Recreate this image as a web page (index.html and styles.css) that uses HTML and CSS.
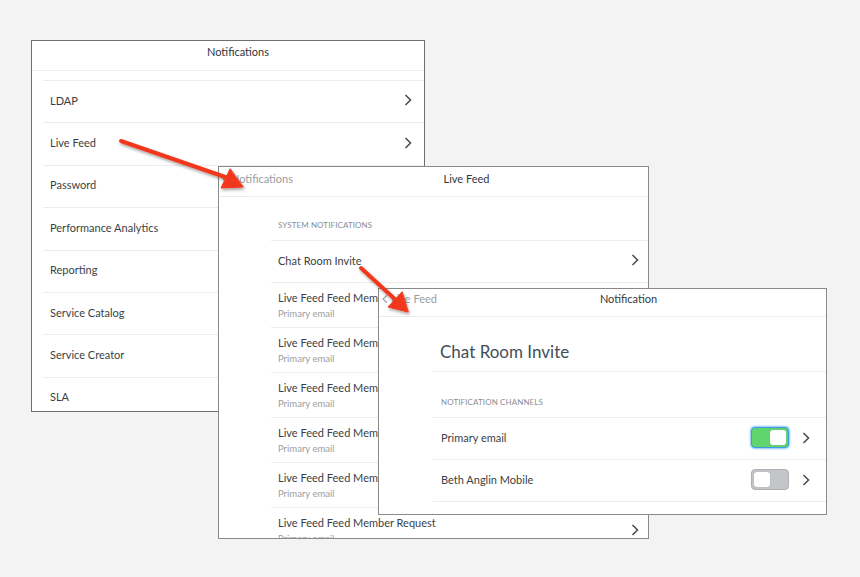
FILE: index.html
```html
<!DOCTYPE html>
<html lang="en">
<head>
  <meta charset="UTF-8">
  <meta name="viewport" content="width=device-width, initial-scale=1.0">
  <title>Notification settings</title>
  <link rel="stylesheet" href="styles.css">
</head>
<body>
  <div class="stage">

    <!-- Pantalla 1: lista de notificaciones -->
    <section class="panel panel-root">
      <header class="bar">
        <span class="bar-title">Notifications</span>
      </header>
      <ul class="list list-root">
        <li class="row"><span>LDAP</span><svg class="chev" viewBox="0 0 8 12"><polyline points="1.5,1 6.5,6 1.5,11"/></svg></li>
        <li class="row"><span>Live Feed</span><svg class="chev" viewBox="0 0 8 12"><polyline points="1.5,1 6.5,6 1.5,11"/></svg></li>
        <li class="row"><span>Password</span></li>
        <li class="row"><span>Performance Analytics</span></li>
        <li class="row"><span>Reporting</span></li>
        <li class="row"><span>Service Catalog</span></li>
        <li class="row"><span>Service Creator</span></li>
        <li class="row"><span>SLA</span></li>
      </ul>
    </section>

    <!-- Pantalla 2: Live Feed -->
    <section class="panel panel-feed">
      <header class="bar">
        <span class="back"><svg class="back-chev" viewBox="0 0 8 12"><polyline points="6.5,1 1.5,6 6.5,11"/></svg>Notifications</span>
        <span class="bar-title">Live Feed</span>
      </header>
      <div class="body body-feed">
        <div class="section-label">SYSTEM NOTIFICATIONS</div>
        <ul class="list">
          <li class="row"><span>Chat Room Invite</span><svg class="chev" viewBox="0 0 8 12"><polyline points="1.5,1 6.5,6 1.5,11"/></svg></li>
          <li class="row row-two"><div><div class="main">Live Feed Feed Member Request</div><div class="sub">Primary email</div></div><svg class="chev" viewBox="0 0 8 12"><polyline points="1.5,1 6.5,6 1.5,11"/></svg></li>
          <li class="row row-two"><div><div class="main">Live Feed Feed Member Request</div><div class="sub">Primary email</div></div><svg class="chev" viewBox="0 0 8 12"><polyline points="1.5,1 6.5,6 1.5,11"/></svg></li>
          <li class="row row-two"><div><div class="main">Live Feed Feed Member Request</div><div class="sub">Primary email</div></div><svg class="chev" viewBox="0 0 8 12"><polyline points="1.5,1 6.5,6 1.5,11"/></svg></li>
          <li class="row row-two"><div><div class="main">Live Feed Feed Member Request</div><div class="sub">Primary email</div></div><svg class="chev" viewBox="0 0 8 12"><polyline points="1.5,1 6.5,6 1.5,11"/></svg></li>
          <li class="row row-two"><div><div class="main">Live Feed Feed Member Request</div><div class="sub">Primary email</div></div><svg class="chev" viewBox="0 0 8 12"><polyline points="1.5,1 6.5,6 1.5,11"/></svg></li>
          <li class="row row-two"><div><div class="main">Live Feed Feed Member Request</div><div class="sub">Primary email</div></div><svg class="chev" viewBox="0 0 8 12"><polyline points="1.5,1 6.5,6 1.5,11"/></svg></li>
        </ul>
      </div>
    </section>

    <!-- Pantalla 3: detalle de notificacion -->
    <section class="panel panel-detail">
      <header class="bar bar-short">
        <span class="back"><svg class="back-chev" viewBox="0 0 8 12"><polyline points="6.5,1 1.5,6 6.5,11"/></svg>Live Feed</span>
        <span class="bar-title">Notification</span>
      </header>
      <div class="body body-detail">
        <h2 class="detail-title">Chat Room Invite</h2>
        <div class="section-label">NOTIFICATION CHANNELS</div>
        <ul class="list">
          <li class="row">
            <span>Primary email</span>
            <span class="controls"><span class="toggle on"><span class="knob"></span></span><svg class="chev" viewBox="0 0 8 12"><polyline points="1.5,1 6.5,6 1.5,11"/></svg></span>
          </li>
          <li class="row">
            <span>Beth Anglin Mobile</span>
            <span class="controls"><span class="toggle"><span class="knob"></span></span><svg class="chev" viewBox="0 0 8 12"><polyline points="1.5,1 6.5,6 1.5,11"/></svg></span>
          </li>
        </ul>
      </div>
    </section>

    <!-- Flechas -->
    <svg class="arrows" viewBox="0 0 860 577">
      <defs>
        <filter id="shadow" x="-20%" y="-20%" width="140%" height="140%">
          <feDropShadow dx="1" dy="2" stdDeviation="1.5" flood-color="#000" flood-opacity="0.35"/>
        </filter>
      </defs>
      <g filter="url(#shadow)" fill="#f2391c" stroke="#f2391c" stroke-linecap="round" stroke-linejoin="round">
        <line x1="121" y1="141" x2="228" y2="178" stroke-width="4"/>
        <polygon points="243,187 221,188 230,169" stroke-width="1"/>
        <line x1="361" y1="268" x2="398" y2="302" stroke-width="4"/>
        <polygon points="408,312 388,307 402,292" stroke-width="1"/>
      </g>
    </svg>

  </div>
</body>
</html>
```

FILE: styles.css
```css
* {
  box-sizing: border-box;
}
body {
  margin: 0;
  background-color: #f3f3f3;
  font-family: Lato, "Open Sans", sans-serif;
  color: #3b3f45;
}
.stage {
  position: relative;
  width: 860px;
  height: 577px;
  overflow: hidden;
}
.panel {
  position: absolute;
  background-color: #fff;
  border: 1px solid #8a8a8a;
  overflow: hidden;
}
.panel-root {
  left: 31px;
  top: 40px;
  width: 394px;
  height: 372px;
  border-color: #6e6e6e;
}
.panel-feed {
  left: 218px;
  top: 166px;
  width: 431px;
  height: 373px;
}
.panel-detail {
  left: 378px;
  top: 288px;
  width: 449px;
  height: 227px;
}
.bar {
  position: relative;
  height: 30px;
  display: flex;
  align-items: flex-start;
  justify-content: center;
  padding-top: 4px;
  border-bottom: 1px solid #ececec;
  font-size: 11px;
  line-height: 14px;
}
.panel-root .bar {
  padding-left: 20px;
}
.panel-feed .bar {
  padding-left: 66px;
  padding-top: 5px;
}
.bar-short {
  height: 28px;
  padding-top: 3px;
}
.panel-detail .bar {
  padding-left: 52px;
}
.bar-title {
  color: #33373c;
}
.back {
  position: absolute;
  left: 3px;
  top: 0;
  display: flex;
  align-items: center;
  gap: 3px;
  color: #9a9ea3;
}
.panel-feed .back {
  top: 5px;
}
.panel-detail .back {
  top: 3px;
}
.back-chev {
  width: 6px;
  height: 10px;
  fill: none;
  stroke: #9a9ea3;
  stroke-width: 1.5;
}
.list {
  list-style: none;
  margin: 0;
  padding: 0;
  border-top: 1px solid #ececec;
}
.list-root {
  margin: 9px 0 0 11px;
}
.row {
  display: flex;
  align-items: center;
  justify-content: space-between;
  height: 42.4px;
  padding: 0 12px 3px 7px;
  border-bottom: 1px solid #ececec;
  font-size: 11px;
  color: #3b3f45;
}
.row-two {
  height: 45px;
  padding-bottom: 0;
}
.chev {
  width: 8px;
  height: 12px;
  fill: none;
  stroke: #4a4e54;
  stroke-width: 1.6;
}
.body-feed {
  padding-left: 52px;
}
.body-feed .row {
  padding-right: 9px;
}
.body-feed .section-label {
  padding: 23px 0 10px 7px;
}
.section-label {
  padding: 22px 0 9px 7px;
  font-size: 8px;
  letter-spacing: 0.1px;
  color: #8a8e93;
}
.main {
  font-size: 11px;
  color: #3b3f45;
  white-space: nowrap;
}
.sub {
  margin-top: 4px;
  font-size: 9.5px;
  color: #9a9ea3;
}
.body-detail {
  padding-left: 54px;
}
.detail-title {
  margin: 0;
  padding: 24px 0 9px 7px;
  font-size: 17px;
  font-weight: normal;
  line-height: 21px;
  color: #3f4d57;
  border-bottom: 1px solid #ececec;
}
.body-detail .section-label {
  padding: 25px 0 10px 8px;
}
.body-detail .row {
  height: 42px;
  padding: 0 16px 2px 8px;
}
.controls {
  display: flex;
  align-items: center;
  gap: 13px;
}
.toggle {
  display: flex;
  width: 38px;
  height: 21px;
  padding: 2px;
  border-radius: 4px;
  background-color: #c3c5c8;
  border: 1px solid #aeb0b3;
}
.toggle.on {
  justify-content: flex-end;
  background-color: #5fd56c;
  border-color: #3c9ae8;
  box-shadow: 0 0 2px 1px #8cc4f3;
}
.knob {
  width: 16px;
  height: 100%;
  border-radius: 3px;
  background-color: #fff;
  box-shadow: 0 0 1px #999;
}
.arrows {
  position: absolute;
  left: 0;
  top: 0;
  width: 860px;
  height: 577px;
  pointer-events: none;
}
```
